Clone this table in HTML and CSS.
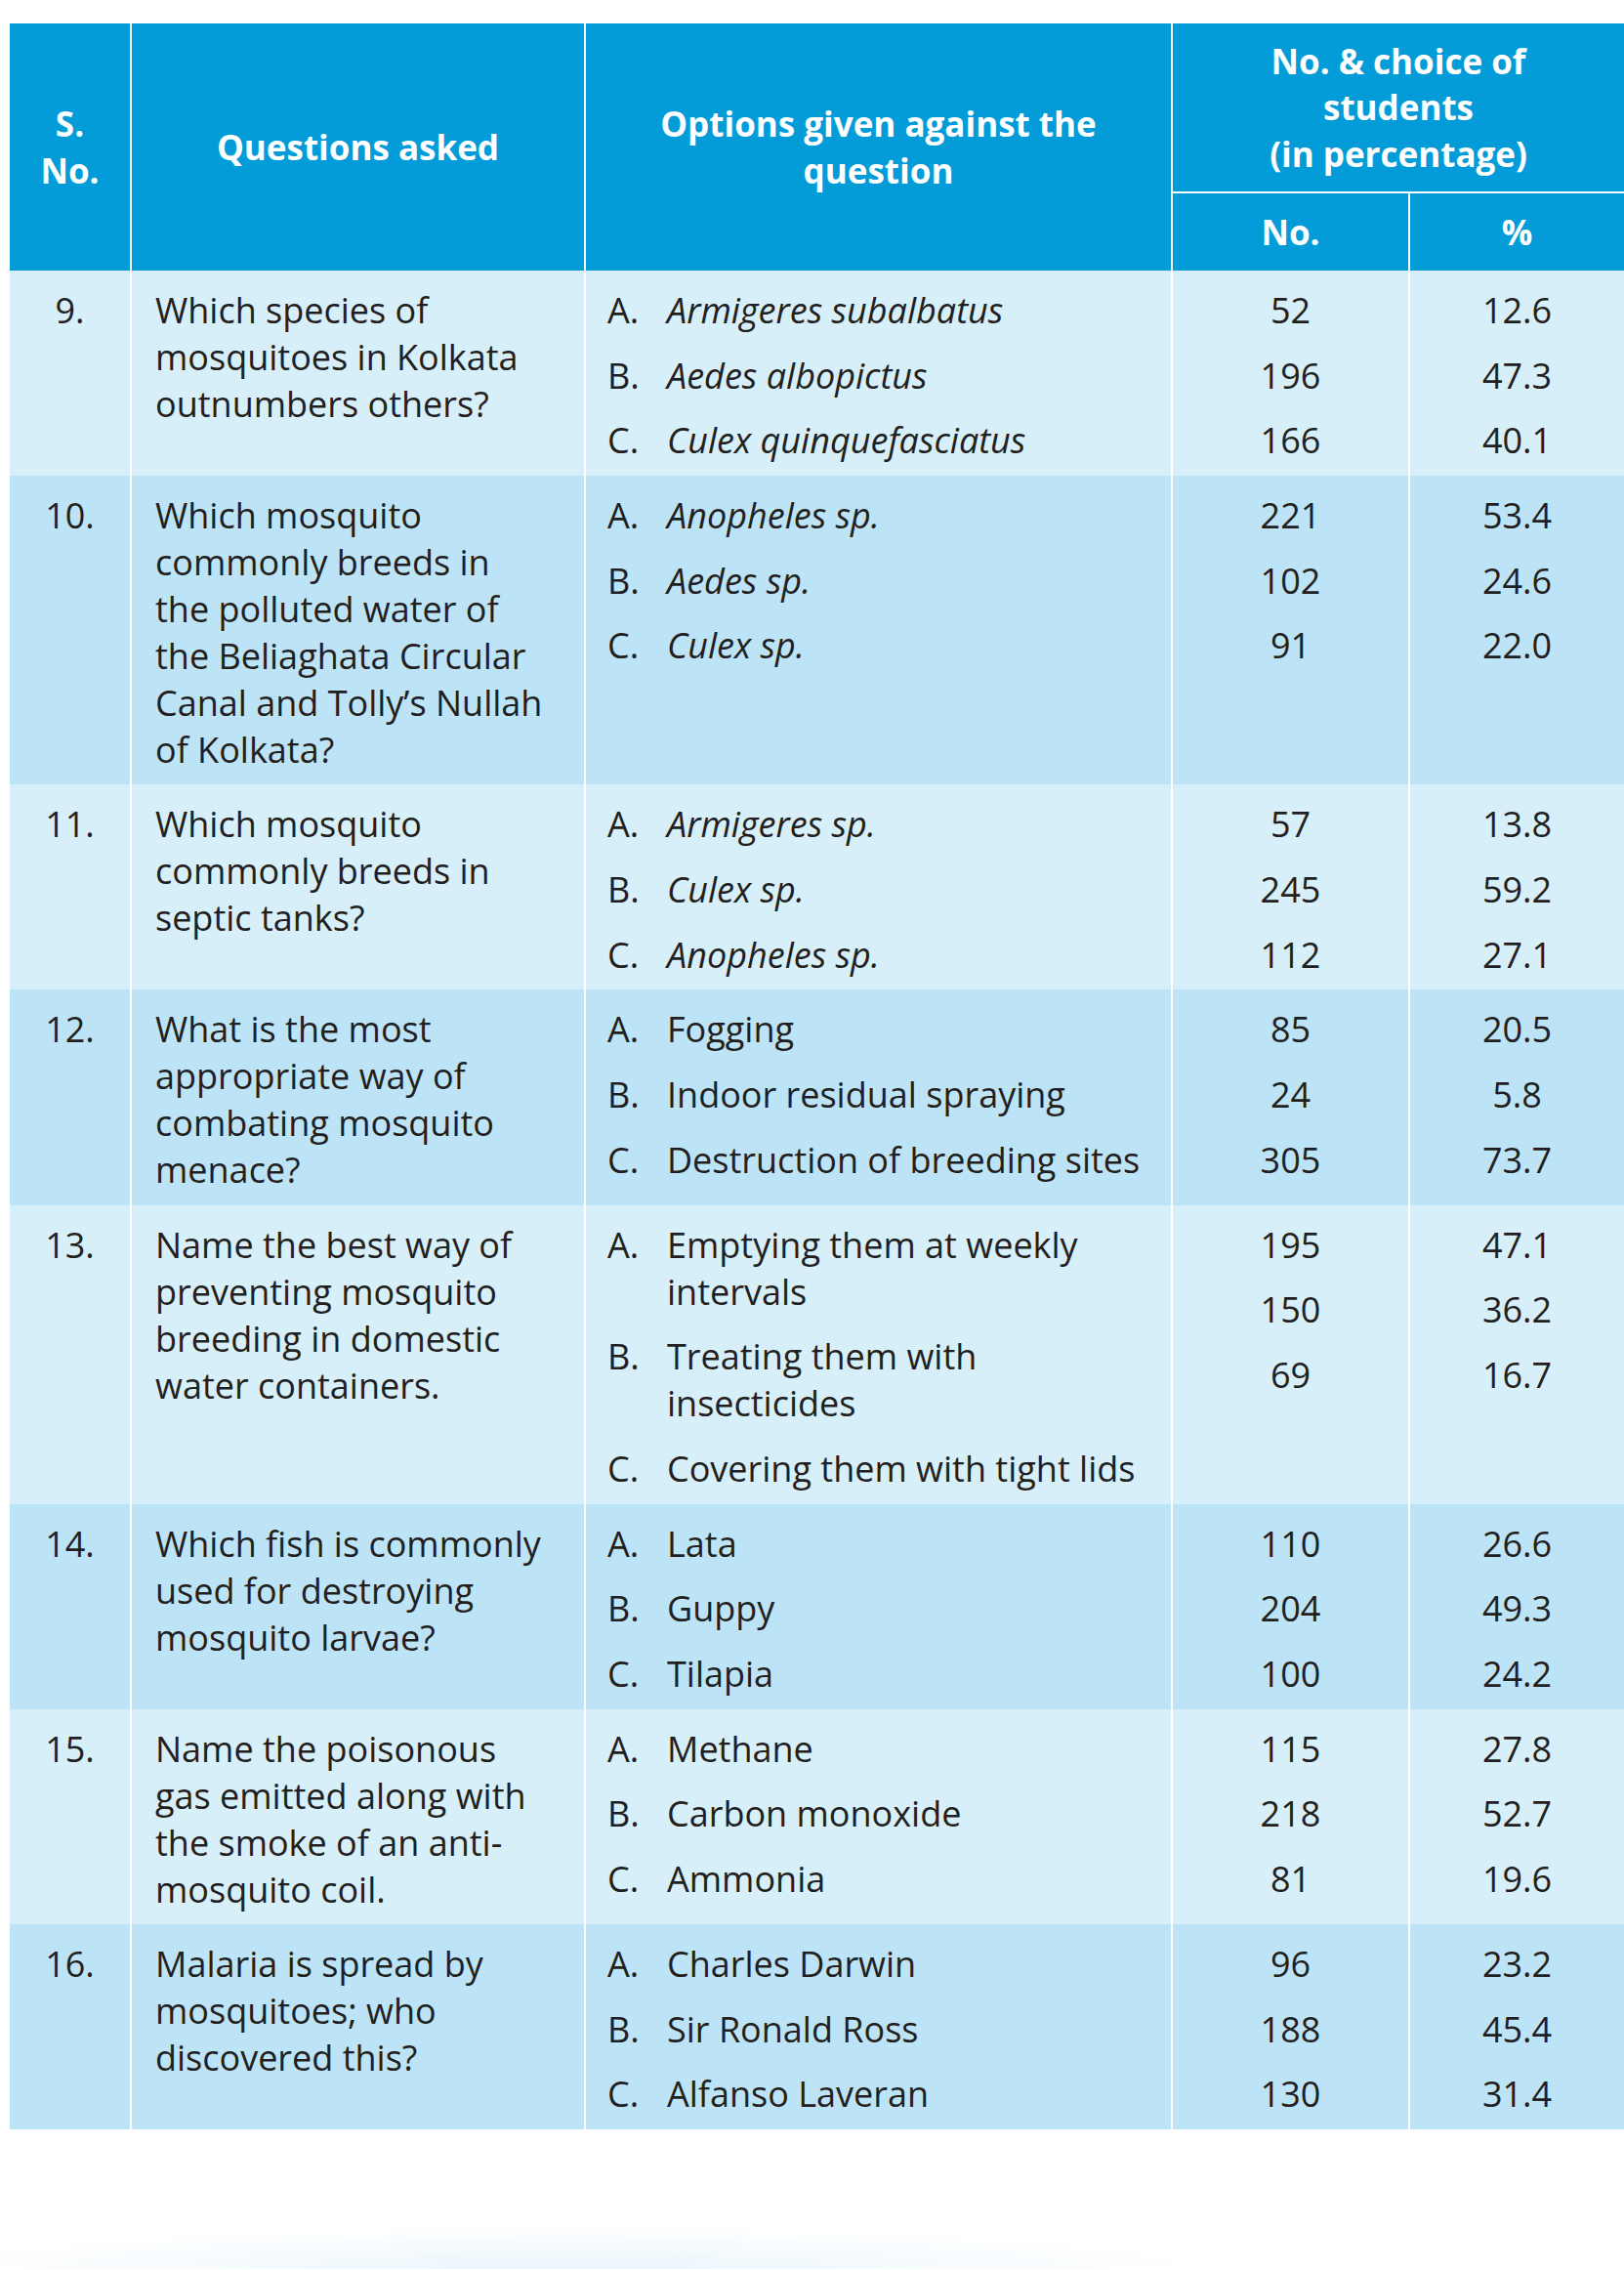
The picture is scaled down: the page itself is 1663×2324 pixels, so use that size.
FILE: index.html
```html
<!DOCTYPE html>
<html lang="en">
<head>
    <meta charset="UTF-8">
    <meta name="viewport" content="width=device-width, initial-scale=1.0">
    <title>Mosquito Awareness Survey - Results</title>
    <link rel="stylesheet" href="styles.css">
</head>
<body>
    <table class="survey">
        <colgroup>
            <col class="c-no">
            <col class="c-q">
            <col class="c-opt">
            <col class="c-num">
            <col class="c-pct">
        </colgroup>
        <thead>
            <tr>
                <th rowspan="2">S.<br>No.</th>
                <th rowspan="2">Questions asked</th>
                <th rowspan="2">Options given against the<br>question</th>
                <th colspan="2" class="group">No. &amp; choice of<br>students<br>(in percentage)</th>
            </tr>
            <tr>
                <th class="sub">No.</th>
                <th class="sub">%</th>
            </tr>
        </thead>
        <tbody>
            <tr class="light">
                <td class="sno">9.</td>
                <td class="question">Which species of<br>mosquitoes in Kolkata<br>outnumbers others?</td>
                <td>
                    <ul class="options">
                        <li><span class="letter">A.</span><span class="opt"><i>Armigeres subalbatus</i></span></li>
                        <li><span class="letter">B.</span><span class="opt"><i>Aedes albopictus</i></span></li>
                        <li><span class="letter">C.</span><span class="opt"><i>Culex quinquefasciatus</i></span></li>
                    </ul>
                </td>
                <td><ul class="nums"><li>52</li><li>196</li><li>166</li></ul></td>
                <td><ul class="nums"><li>12.6</li><li>47.3</li><li>40.1</li></ul></td>
            </tr>
            <tr class="dark">
                <td class="sno">10.</td>
                <td class="question">Which mosquito<br>commonly breeds in<br>the polluted water of<br>the Beliaghata Circular<br>Canal and Tolly’s Nullah<br>of Kolkata?</td>
                <td>
                    <ul class="options">
                        <li><span class="letter">A.</span><span class="opt"><i>Anopheles sp.</i></span></li>
                        <li><span class="letter">B.</span><span class="opt"><i>Aedes sp.</i></span></li>
                        <li><span class="letter">C.</span><span class="opt"><i>Culex sp.</i></span></li>
                    </ul>
                </td>
                <td><ul class="nums"><li>221</li><li>102</li><li>91</li></ul></td>
                <td><ul class="nums"><li>53.4</li><li>24.6</li><li>22.0</li></ul></td>
            </tr>
            <tr class="light">
                <td class="sno">11.</td>
                <td class="question">Which mosquito<br>commonly breeds in<br>septic tanks?</td>
                <td>
                    <ul class="options">
                        <li><span class="letter">A.</span><span class="opt"><i>Armigeres sp.</i></span></li>
                        <li><span class="letter">B.</span><span class="opt"><i>Culex sp.</i></span></li>
                        <li><span class="letter">C.</span><span class="opt"><i>Anopheles sp.</i></span></li>
                    </ul>
                </td>
                <td><ul class="nums"><li>57</li><li>245</li><li>112</li></ul></td>
                <td><ul class="nums"><li>13.8</li><li>59.2</li><li>27.1</li></ul></td>
            </tr>
            <tr class="dark">
                <td class="sno">12.</td>
                <td class="question">What is the most<br>appropriate way of<br>combating mosquito<br>menace?</td>
                <td>
                    <ul class="options">
                        <li><span class="letter">A.</span><span class="opt">Fogging</span></li>
                        <li><span class="letter">B.</span><span class="opt">Indoor residual spraying</span></li>
                        <li><span class="letter">C.</span><span class="opt">Destruction of breeding sites</span></li>
                    </ul>
                </td>
                <td><ul class="nums"><li>85</li><li>24</li><li>305</li></ul></td>
                <td><ul class="nums"><li>20.5</li><li>5.8</li><li>73.7</li></ul></td>
            </tr>
            <tr class="light">
                <td class="sno">13.</td>
                <td class="question">Name the best way of<br>preventing mosquito<br>breeding in domestic<br>water containers.</td>
                <td>
                    <ul class="options">
                        <li><span class="letter">A.</span><span class="opt">Emptying them at weekly<br>intervals</span></li>
                        <li><span class="letter">B.</span><span class="opt">Treating them with<br>insecticides</span></li>
                        <li><span class="letter">C.</span><span class="opt">Covering them with tight lids</span></li>
                    </ul>
                </td>
                <td><ul class="nums"><li>195</li><li>150</li><li>69</li></ul></td>
                <td><ul class="nums"><li>47.1</li><li>36.2</li><li>16.7</li></ul></td>
            </tr>
            <tr class="dark">
                <td class="sno">14.</td>
                <td class="question">Which fish is commonly<br>used for destroying<br>mosquito larvae?</td>
                <td>
                    <ul class="options">
                        <li><span class="letter">A.</span><span class="opt">Lata</span></li>
                        <li><span class="letter">B.</span><span class="opt">Guppy</span></li>
                        <li><span class="letter">C.</span><span class="opt">Tilapia</span></li>
                    </ul>
                </td>
                <td><ul class="nums"><li>110</li><li>204</li><li>100</li></ul></td>
                <td><ul class="nums"><li>26.6</li><li>49.3</li><li>24.2</li></ul></td>
            </tr>
            <tr class="light">
                <td class="sno">15.</td>
                <td class="question">Name the poisonous<br>gas emitted along with<br>the smoke of an anti-<br>mosquito coil.</td>
                <td>
                    <ul class="options">
                        <li><span class="letter">A.</span><span class="opt">Methane</span></li>
                        <li><span class="letter">B.</span><span class="opt">Carbon monoxide</span></li>
                        <li><span class="letter">C.</span><span class="opt">Ammonia</span></li>
                    </ul>
                </td>
                <td><ul class="nums"><li>115</li><li>218</li><li>81</li></ul></td>
                <td><ul class="nums"><li>27.8</li><li>52.7</li><li>19.6</li></ul></td>
            </tr>
            <tr class="dark">
                <td class="sno">16.</td>
                <td class="question">Malaria is spread by<br>mosquitoes; who<br>discovered this?</td>
                <td>
                    <ul class="options">
                        <li><span class="letter">A.</span><span class="opt">Charles Darwin</span></li>
                        <li><span class="letter">B.</span><span class="opt">Sir Ronald Ross</span></li>
                        <li><span class="letter">C.</span><span class="opt">Alfanso Laveran</span></li>
                    </ul>
                </td>
                <td><ul class="nums"><li>96</li><li>188</li><li>130</li></ul></td>
                <td><ul class="nums"><li>23.2</li><li>45.4</li><li>31.4</li></ul></td>
            </tr>
        </tbody>
    </table>

    <div class="page-foot"></div>
</body>
</html>
```

FILE: styles.css
```css
body { margin: 0; padding: 24px 0 0 10px; background-color: #fff; color: #231f20; font-family: "Open Sans", "Noto Sans", sans-serif; }

/* tabel hasil survei */
.survey {
    width: 1653px;
    border-collapse: collapse;
    table-layout: fixed;
    font-size: 36px;
    line-height: 48px;
}

.c-no { width: 124px; }
.c-q { width: 465px; }
.c-opt { width: 601px; }
.c-num { width: 243px; }
.c-pct { width: 220px; }

.survey th {
    background-color: #049cd8;
    color: white;
    font-weight: bold;
    font-size: 35px;
    line-height: 47.4px;
    text-align: center;
    vertical-align: middle;
    padding: 0;
    border-left: 2px solid #fff;
}
.survey th:first-child { border-left: none; }
.survey thead tr:first-child th { height: 172px; }
.survey th.sub { height: 79px; border-top: 2px solid #fff; }
.survey thead tr:nth-child(2) th:first-child { border-left: 2px solid #fff; }

.survey td {
    vertical-align: top;
    padding: 17px 0 11.5px;
    border-left: 2px solid #fff;
}
.survey td:first-child { border-left: none; }

tr.light td { background-color: #d6eff9; }
tr.dark td { background-color: #bde4f6; }

.sno { text-align: center; }
.question { padding-left: 24px !important; padding-right: 4px !important; white-space: nowrap; }

.options, .nums { list-style: none; margin: 0; padding: 0; }
.options { padding-left: 22px; }
.options li { display: flex; }
.options li + li, .nums li + li { margin-top: 18.7px; }
.letter { flex: 0 0 61px; }
.opt { white-space: nowrap; }
.nums { text-align: center; }

.page-foot {
    height: 143px;
    margin-left: -10px;
    background: radial-gradient(ellipse 40% 30% at 35% 100%, rgba(214, 236, 248, 0.5), rgba(255, 255, 255, 0) 100%);
}
```
